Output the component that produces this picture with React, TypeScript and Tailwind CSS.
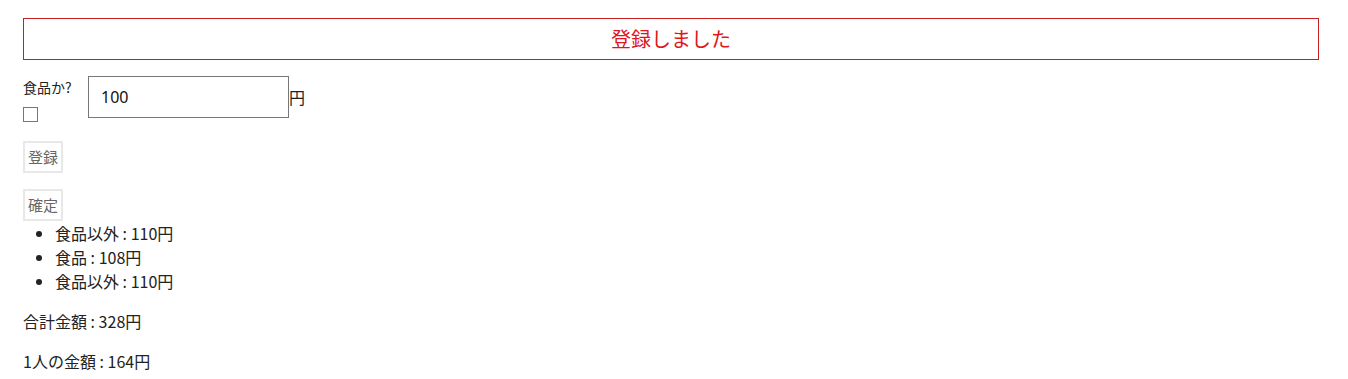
import React from "react";

export default function App() {
  const items = [
    { label: "食品以外", price: 110 },
    { label: "食品", price: 108 },
    { label: "食品以外", price: 110 },
  ];
  return (
    <div
      className="px-[23px] pt-[18px] text-[16px] leading-[24px] text-[#222] bg-white min-h-[379px]"
      style={{ fontFamily: '"Noto Sans CJK JP", "Noto Sans", sans-serif' }}
    >
      <div className="w-[1296px] h-[42px] border border-[#c81e1e] flex items-center justify-center text-[20px] text-[#e0161b]">
        登録しました
      </div>
      <div className="flex items-start mt-[16px]">
        <div className="w-[65px] flex flex-col">
          <span className="text-[14px] leading-[18px] mt-[2px]">食品か?</span>
          <div className="mt-[11px] w-[15px] h-[15px] border border-[#777] bg-white" />
        </div>
        <input
          className="w-[201px] h-[42px] border border-[#777] px-[12px] text-[16px] text-[#111] outline-none"
          style={{ fontFamily: '"Noto Sans", "Noto Sans CJK JP", sans-serif' }}
          defaultValue="100"
        />
        <span className="text-[16px] mt-[9px]">円</span>
      </div>
      <div className="mt-[19px]">
        <button className="h-[32px] px-[3px] border-2 border-[#e8e8e8] bg-white text-[15px] leading-[20px] text-[#666]">
          登録
        </button>
      </div>
      <div className="mt-[16px]">
        <button className="h-[32px] px-[3px] border-2 border-[#e8e8e8] bg-white text-[15px] leading-[20px] text-[#666]">
          確定
        </button>
      </div>
      <ul className="list-disc pl-[32px]">
        {items.map((it, i) => (
          <li key={i}>
            {it.label} : {it.price}円
          </li>
        ))}
      </ul>
      <p className="mt-[16px]">合計金額 : 328円</p>
      <p className="mt-[16px]">1人の金額 : 164円</p>
    </div>
  );
}
